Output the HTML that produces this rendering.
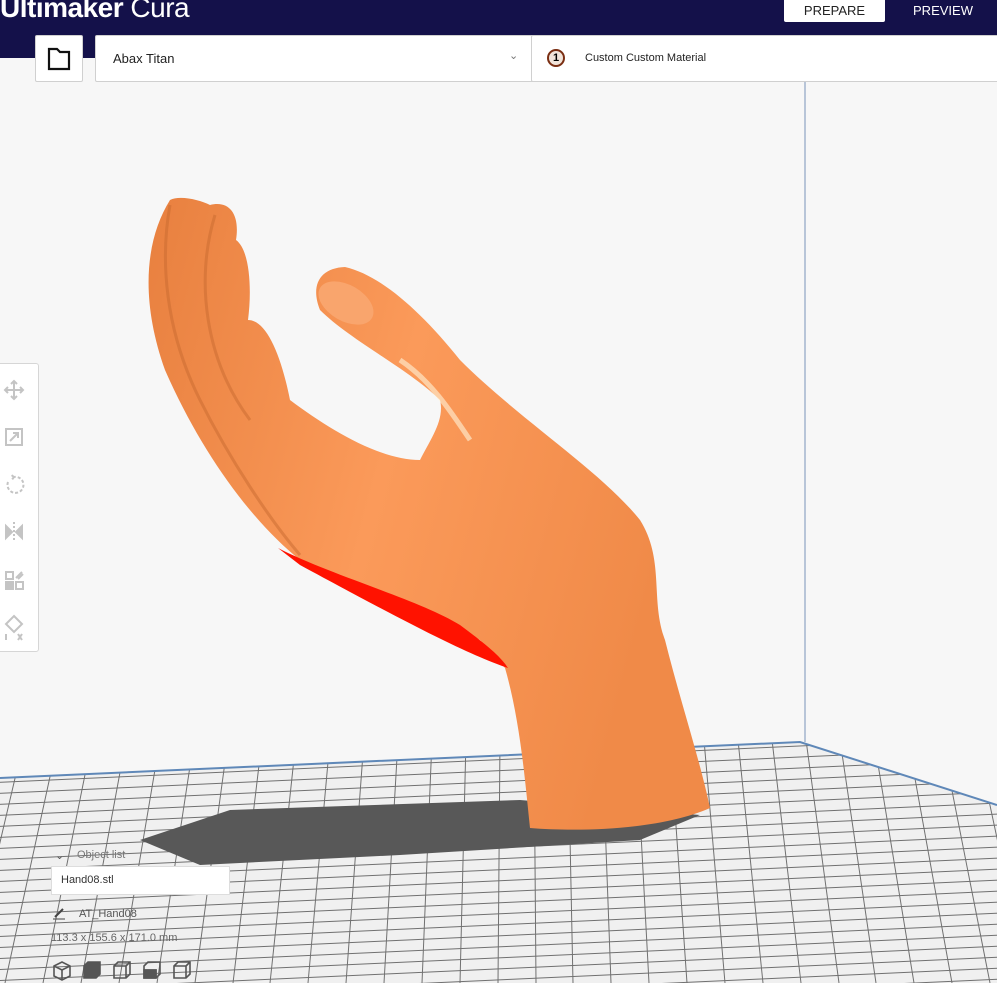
<!DOCTYPE html>
<html><head><meta charset="utf-8"><style>
html,body{margin:0;padding:0;width:997px;height:983px;overflow:hidden;background:#f7f7f7;font-family:"Liberation Sans",sans-serif}
.top{position:absolute;left:0;top:0;width:997px;height:58px;background:#14114a}
.logo{position:absolute;left:0;top:-8px;color:#fff;font-size:28px;letter-spacing:-0.5px}
.logo b{font-weight:bold}
.tab{position:absolute;top:0;height:22px;line-height:22px;font-size:13px;color:#fff;text-align:center}
.bar{position:absolute;top:35px;height:47px;background:#fff;border:1px solid #d0d0d0;box-sizing:border-box;border-radius:2px}
.side{position:absolute;left:-3px;top:363px;width:42px;height:289px;background:#fff;border:1px solid #d6d6d6;border-radius:3px;box-sizing:border-box}
.txt{position:absolute;font-size:11px;color:#555}
</style></head><body>
<svg style="position:absolute;left:0;top:0" width="997" height="983">
<defs>
<pattern id="g" width="997" height="11" patternUnits="userSpaceOnUse" patternTransform="rotate(-2.6)">
<rect width="997" height="11" fill="#f0f0f0"/>
<path d="M0 0.5H997" stroke="#707070" stroke-width="1"/>
</pattern>
<clipPath id="pc"><polygon points="0,778 800,742 997,805 997,983 0,983"/></clipPath>
<linearGradient id="h" x1="0" y1="0" x2="1" y2="0.3">
<stop offset="0" stop-color="#e8803f"/><stop offset="0.5" stop-color="#fb9a5a"/><stop offset="1" stop-color="#f08a48"/>
</linearGradient>
</defs>
<line x1="805" y1="82" x2="805" y2="742" stroke="#7a93b8" stroke-width="1"/>
<polygon points="0,778 800,742 997,805 997,983 0,983" fill="url(#g)"/>
<g clip-path="url(#pc)" stroke="#707070" stroke-width="1">
<path d="M-112 740L-184 983M-78 740L-146 983M-44 740L-108 983M-10 740L-70 983M24 740L-33 983M58 740L5 983M92 740L43 983M126 740L81 983M160 740L119 983M194 740L157 983M228 740L195 983M262 740L233 983M296 740L270 983M330 740L308 983M364 740L346 983M398 740L384 983M432 740L422 983M466 740L460 983M500 740L498 983M534 740L536 983M568 740L573 983M602 740L611 983M636 740L649 983M670 740L687 983M704 740L725 983M738 740L763 983M772 740L801 983M806 740L839 983M840 740L876 983M874 740L914 983M908 740L952 983M942 740L990 983M976 740L1028 983M1010 740L1066 983M1044 740L1104 983"/>
</g>
<polyline points="0,778 800,742 997,805" fill="none" stroke="#5f88b8" stroke-width="2"/>
<polygon points="140,840 230,810 520,800 700,815 640,840 400,855 200,865" fill="#585858"/>
<path d="M530,828 C525,780 520,720 505,668 L480,640 L300,560 C250,520 200,450 165,370 C140,300 145,240 170,200 C180,195 200,200 210,205 C230,200 240,215 236,240 C250,250 252,290 248,320 C265,320 280,350 290,400 C330,430 380,460 420,460 C430,440 445,420 440,400 C410,370 350,340 320,310 C310,285 320,268 345,267 C380,275 420,310 460,360 C520,420 600,470 640,520 C665,560 650,600 665,640 C680,700 700,760 710,808 C660,830 580,832 530,828Z" fill="url(#h)"/>
<path d="M170,205 C160,260 165,330 200,400 C230,460 270,520 300,555" fill="none" stroke="#c86a30" stroke-width="3" opacity="0.5"/>
<path d="M215,215 C195,280 205,360 250,420" fill="none" stroke="#c86a30" stroke-width="3" opacity="0.5"/>
<ellipse cx="346" cy="303" rx="30" ry="18" fill="#f9a56d" transform="rotate(30 346 303)"/>
<path d="M400,360 C430,380 450,410 470,440" stroke="#fff4d8" stroke-width="5" opacity="0.6" fill="none"/>
<path d="M278,548 C330,575 420,600 460,625 C480,640 500,655 508,668 C470,655 420,630 300,565Z" fill="#ff1200"/>
</svg>
<div class="top"></div>
<div class="logo"><b>Ultimaker</b> Cura</div>
<div class="tab" style="left:784px;width:101px;background:#fff;color:#222;border-radius:0 0 2px 2px">PREPARE</div>
<div class="tab" style="left:900px;width:86px">PREVIEW</div>
<div class="bar" style="left:35px;width:48px">
<svg width="46" height="45"><path d="M13 13H21L24 16H33V33H13Z" fill="none" stroke="#111" stroke-width="2.2"/></svg></div>
<div class="bar" style="left:95px;width:440px"><span style="position:absolute;left:17px;top:15px;font-size:13px;color:#222">Abax Titan</span><span style="position:absolute;left:413px;top:13px;font-size:11px;color:#777">&#8964;</span></div>
<div class="bar" style="left:531px;width:470px"><span style="position:absolute;left:15px;top:13px;width:18px;height:18px;border-radius:50%;background:#f1e4da;border:2px solid #7a2e12;box-sizing:border-box;font-size:11px;font-weight:bold;text-align:center;line-height:14px">1</span><span style="position:absolute;left:53px;top:16px;font-size:11px;color:#222">Custom Custom Material</span></div>
<div class="side">
<svg width="40" height="287" style="position:absolute;left:2px;top:0" fill="none" stroke="#c4c4c4" stroke-width="2">
<path d="M14 17V35M5 26H23M11 20L14 17L17 20M11 32L14 35L17 32M8 23L5 26L8 29M20 23L23 26L20 29"/>
<rect x="6" y="65" width="16" height="16"/><path d="M10 77L18 69M13 69H18V74"/>
<path d="M8 118A8 8 0 1 0 14 113M14 113L10 110M14 113L11 117" stroke-dasharray="3 2"/>
<path d="M6 162L12 168L6 174ZM22 162L16 168L22 174Z" fill="#c4c4c4"/><path d="M14 158V178" stroke-dasharray="2 2"/>
<rect x="6" y="208" width="7" height="7"/><rect x="6" y="218" width="7" height="7" fill="#c4c4c4"/><rect x="16" y="218" width="7" height="7"/><path d="M16 214L22 208M18 215L23 210"/>
<path d="M14 252L22 260L14 268L6 260Z"/><path d="M6 270V276M18 270L22 276M22 270L18 276"/>
</svg></div>
<div class="txt" style="left:55px;top:849px">&#8964;</div>
<div class="txt" style="left:77px;top:849px;color:#777">Object list</div>
<div style="position:absolute;left:51px;top:866px;width:179px;height:29px;background:#fff;border:1px solid #ddd;box-sizing:border-box;font-size:11px;color:#333;line-height:27px;padding-left:9px">Hand08.stl</div>
<svg style="position:absolute;left:52px;top:906px" width="16" height="14"><path d="M3 11L11 3" stroke="#444" stroke-width="2"/><path d="M1 13H13" stroke="#444"/></svg>
<div class="txt" style="left:79px;top:908px">AT_Hand08</div>
<div class="txt" style="left:51px;top:932px;color:#666">113.3 x 155.6 x 171.0 mm</div>
<svg style="position:absolute;left:52px;top:960px" width="145" height="23" fill="none" stroke="#555" stroke-width="1.6">
<path d="M2 6L10 2L18 6V16L10 20L2 16ZM2 6L10 10L18 6M10 10V20"/>
<path d="M32 6L36 2H48V14L44 18H32Z" fill="#555"/>
<path d="M62 6L66 2H78V14L74 18H62ZM62 6H74V18M74 6L78 2"/>
<path d="M92 6L96 2H108V14L104 18H92ZM92 10H104V18" /><rect x="92" y="10" width="12" height="8" fill="#555"/>
<path d="M122 6L126 2H138V14L134 18H122ZM122 6H134V18M134 6L138 2"/>
</svg>
</body></html>
